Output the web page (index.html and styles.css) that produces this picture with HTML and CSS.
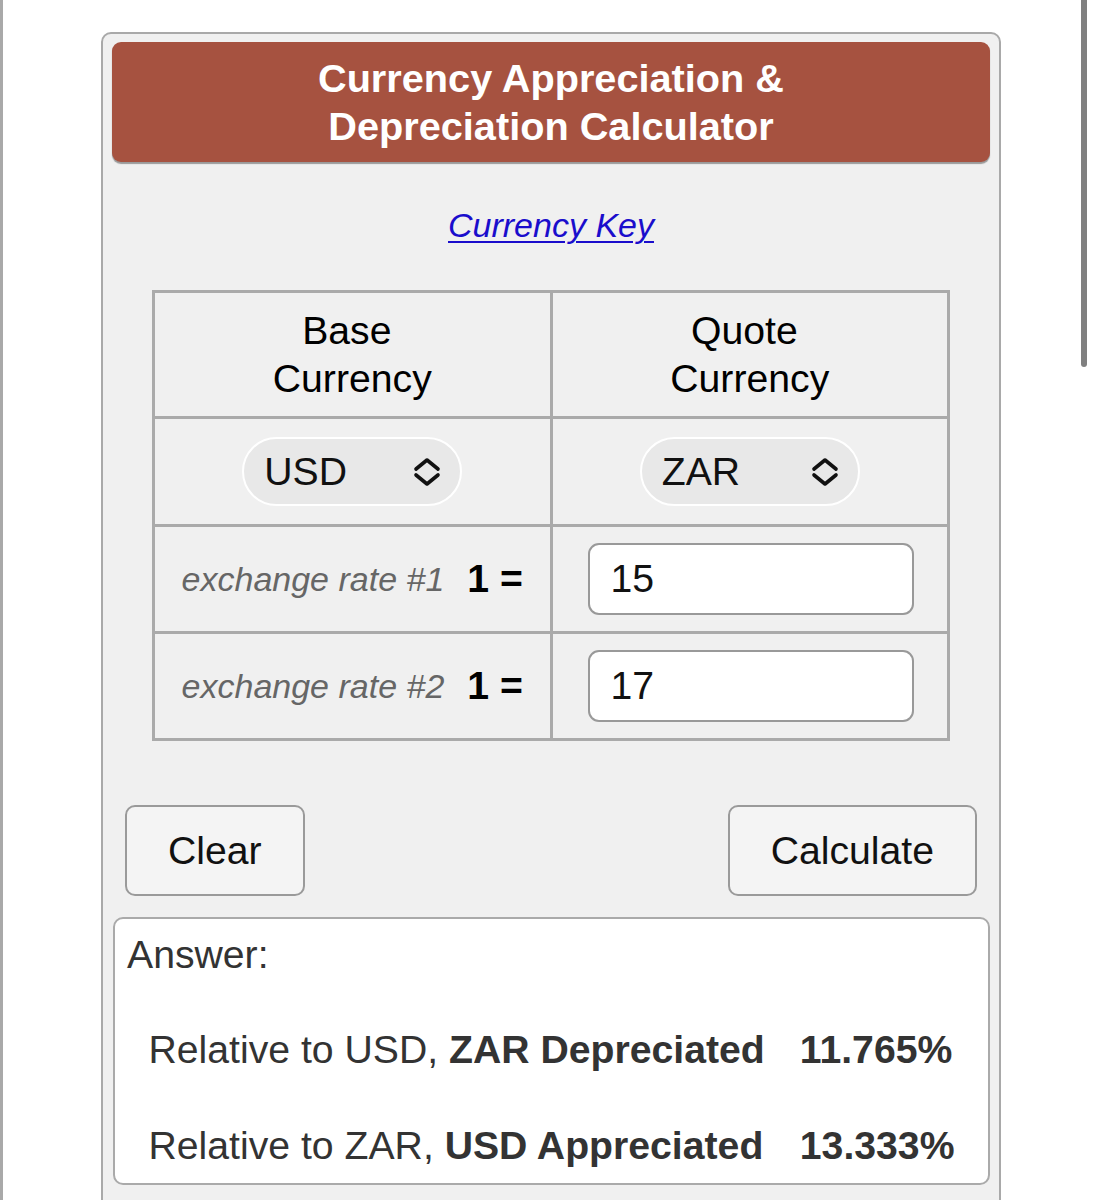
FILE: index.html
```html
<!DOCTYPE html>
<html lang="en">
<head>
<meta charset="utf-8">
<title>Currency Appreciation &amp; Depreciation Calculator</title>
<link rel="stylesheet" href="styles.css">
</head>
<body>
<div class="page">
  <div class="calc">
    <div class="calc-header">Currency Appreciation &amp;<br>Depreciation Calculator</div>
    <div class="key-row"><a class="key-link" href="#">Currency Key</a></div>
    <div class="grid">
      <div class="cell head">Base&nbsp;<br>Currency</div>
      <div class="cell head">Quote&nbsp;<br>Currency</div>
      <div class="cell">
        <div class="pill"><span>USD</span>
          <svg class="chev" viewBox="0 0 30 30" width="30" height="30"><path d="M4 12 L15 3 L26 12 M4 18 L15 27 L26 18" fill="none" stroke="#111" stroke-width="3.6" stroke-linecap="round" stroke-linejoin="round"/></svg>
        </div>
      </div>
      <div class="cell">
        <div class="pill"><span>ZAR</span>
          <svg class="chev" viewBox="0 0 30 30" width="30" height="30"><path d="M4 12 L15 3 L26 12 M4 18 L15 27 L26 18" fill="none" stroke="#111" stroke-width="3.6" stroke-linecap="round" stroke-linejoin="round"/></svg>
        </div>
      </div>
      <div class="cell label"><span class="rate">exchange rate #1</span><b class="eq">1 =</b></div>
      <div class="cell inp"><div class="field">15</div></div>
      <div class="cell label"><span class="rate">exchange rate #2</span><b class="eq">1 =</b></div>
      <div class="cell inp"><div class="field">17</div></div>
    </div>
    <div class="buttons">
      <button class="btn" type="button">Clear</button>
      <button class="btn" type="button">Calculate</button>
    </div>
    <div class="answer">
      <div class="answer-title">Answer:</div>
      <div class="results">
        <div>Relative to USD, <b>ZAR Depreciated</b></div><div><b>11.765%</b></div>
        <div>Relative to ZAR, <b>USD Appreciated</b></div><div><b>13.333%</b></div>
      </div>
    </div>
  </div>
  <div class="scrollbar"></div>
</div>
</body>
</html>
```
FILE: styles.css
```css
html { overflow: hidden; }
body {
  margin: 0;
  background: #fff;
  font-family: "Liberation Sans", Arial, Helvetica, sans-serif;
  color: #000;
}
.page {
  position: relative;
  min-height: 1200px;
  border-left: 3px solid #a9a9a9;
  padding-top: 32px;
  box-sizing: border-box;
}
.calc {
  box-sizing: border-box;
  width: 900px;
  margin-left: 98px;
  background: #f0f0f0;
  border: 2px solid #a9a9a9;
  border-radius: 10px;
  padding: 8px 9px 30px;
}
.calc-header {
  background: #a65240;
  color: #fff;
  font-weight: bold;
  font-size: 39.7px;
  line-height: 48px;
  text-align: center;
  padding: 12px 0;
  border-radius: 9px;
  box-shadow: 0 2px 1px #9a9a9a;
}
.key-row {
  text-align: center;
  margin: 43px 0 45px;
  font-size: 34px;
  line-height: 40px;
  height: 40px;
}
.key-link {
  color: #1a0dcc;
  font-style: italic;
  font-size: 34px;
  text-decoration: underline;
  text-decoration-thickness: 2px;
  text-underline-offset: 4px;
}
.grid {
  width: 798px;
  box-sizing: border-box;
  margin: 0 auto;
  display: grid;
  grid-template-columns: 1fr 1fr;
  grid-template-rows: 123px 105px 104px 104px;
  gap: 3px;
  padding: 3px;
  background: #aaaaaa;
}
.cell {
  background: #f0f0f0;
  display: flex;
  align-items: center;
  justify-content: center;
  font-size: 39.2px;
  line-height: 48px;
  text-align: center;
}
.pill {
  box-sizing: border-box;
  width: 220px;
  height: 69px;
  border: 2px solid #fff;
  border-radius: 35px;
  background: #e8e8e8;
  display: flex;
  align-items: center;
  justify-content: space-between;
  padding: 0 18px 0 20px;
  color: #111;
}
.chev { display: block; }
.label { color: #000; }
.rate {
  font-style: italic;
  font-size: 34px;
  color: #666;
}
.eq {
  margin-left: 23px;
  font-size: 39.2px;
}
.inp { padding: 0 33px 0 35px; }
.field {
  box-sizing: border-box;
  width: 100%;
  height: 72px;
  background: #fff;
  border: 2px solid #999;
  border-radius: 11px;
  text-align: left;
  padding-left: 21px;
  line-height: 68px;
  color: #111;
}
.buttons {
  display: flex;
  justify-content: space-between;
  margin-top: 64px;
  padding: 0 13px;
}
.btn {
  height: 91px;
  padding: 0 41px;
  background: #f4f4f4;
  border: 2px solid #9a9a9a;
  border-radius: 10px;
  font-family: inherit;
  font-size: 39.2px;
  color: #111;
}
.answer {
  margin-top: 21px;
  margin-left: 1px;
  background: #fff;
  border: 2px solid #aaaaaa;
  border-radius: 10px;
  padding: 12px 12px 13px;
  color: #333;
  font-size: 39.2px;
  line-height: 48px;
}
.results {
  display: grid;
  grid-template-columns: auto auto;
  justify-content: center;
  column-gap: 35px;
  row-gap: 48px;
  margin-top: 47px;
}
.scrollbar {
  position: absolute;
  top: 0;
  left: 1078px;
  width: 6px;
  height: 367px;
  background: #808080;
  border-radius: 0 0 3px 3px;
}
```
